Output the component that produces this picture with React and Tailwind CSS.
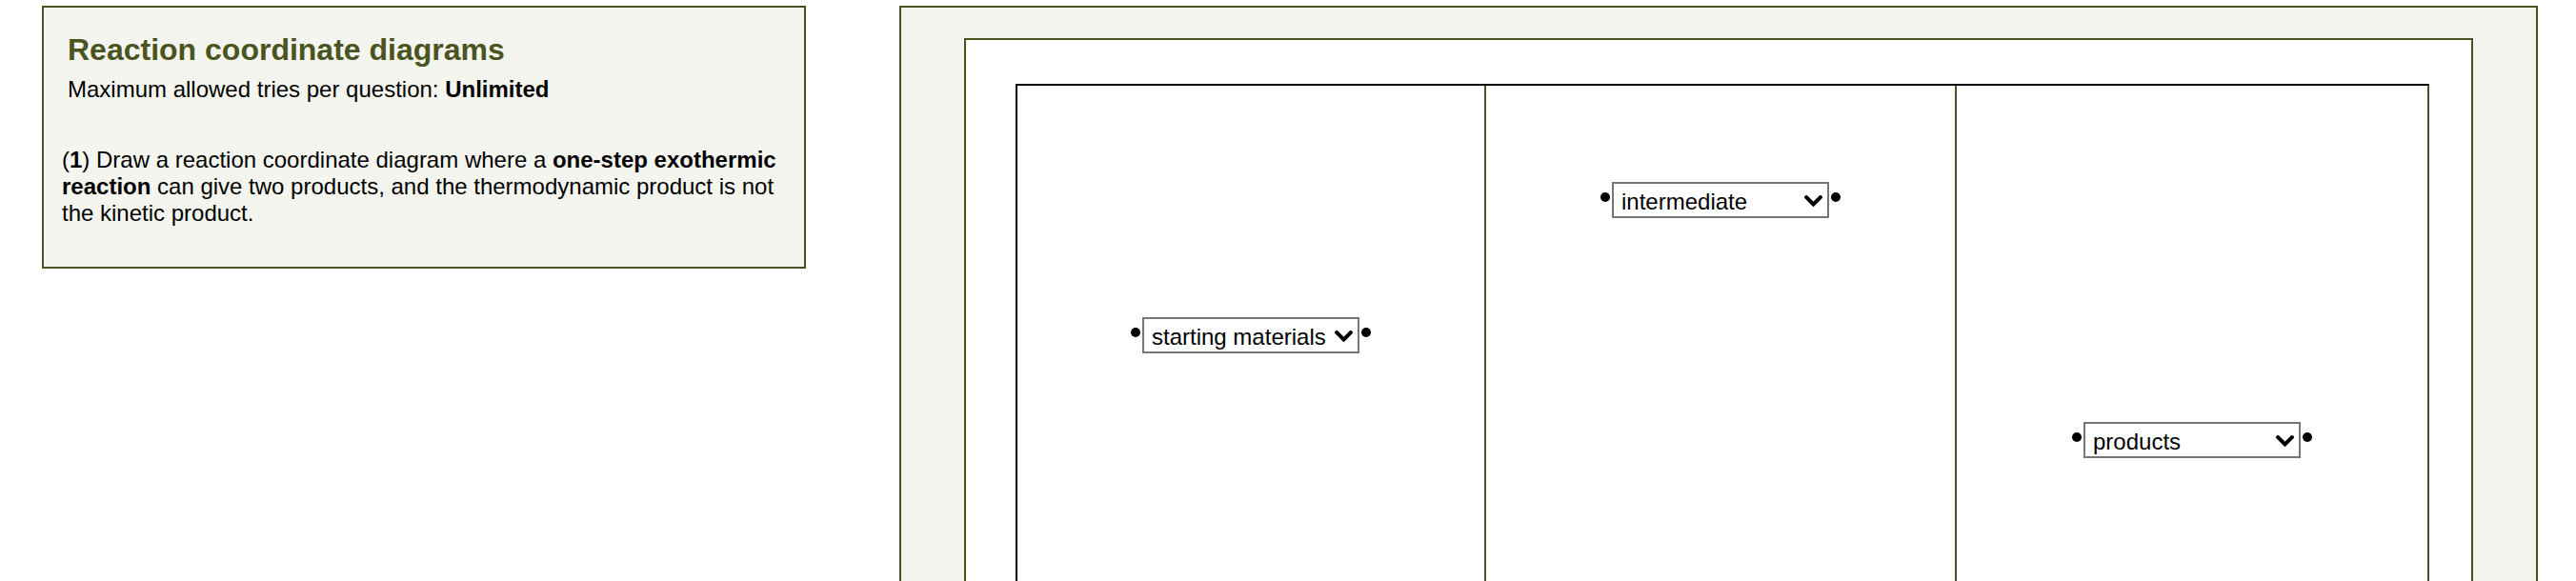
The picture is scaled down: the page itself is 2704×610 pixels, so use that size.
import React from 'react';

const OPTIONS = ['starting materials', 'intermediate', 'transition state', 'products'];

// one column per point on the reaction coordinate; padding sets the energy level
const LEVELS = [
  { id: 'sm', label: 'starting materials', offset: 'pt-[243px]', width: 'w-[492px] border-r-2 border-[#4b5320]' },
  { id: 'int', label: 'intermediate', offset: 'pt-[101px]', width: 'w-[494px] border-r-2 border-[#4b5320]' },
  { id: 'prod', label: 'products', offset: 'pt-[353px]', width: 'flex-1' },
];

const Dot = () => <span className="mt-[11px] block h-[10px] w-[10px] shrink-0 rounded-full bg-black" />;

const LevelSelect = ({ value }) => (
  <div className="relative h-[38px] w-[228px] shrink-0">
    <select
      defaultValue={value}
      className="h-full w-full appearance-none border-2 border-[#767676] bg-white pl-[8px] pr-[30px] pt-[4px] text-[24px] leading-[28px] text-black outline-none"
    >
      {OPTIONS.map((o) => (
        <option key={o} value={o}>
          {o}
        </option>
      ))}
    </select>
    <svg
      className="pointer-events-none absolute right-[7px] top-[14px]"
      width="19"
      height="12"
      viewBox="0 0 19 12"
      fill="none"
    >
      <path d="M2.2 2.2l7.3 7.3 7.3-7.3" stroke="#000" strokeWidth="4" strokeLinecap="square" />
    </svg>
  </div>
);

const LevelColumn = ({ level }) => (
  <div className={`flex shrink-0 items-start justify-center gap-[2px] ${level.offset} ${level.width}`}>
    <Dot />
    <LevelSelect value={level.label} />
    <Dot />
  </div>
);

const QuestionPanel = () => (
  <div className="h-[276px] w-[802px] shrink-0 border-2 border-[#4b5320] bg-[#f4f5ee] pl-[19px] pr-[20px] pt-[26px] text-black">
    <div className="ml-[6px]">
      <h2 className="text-[32px] font-bold leading-[37px] text-[#4b5320]">Reaction coordinate diagrams</h2>
      <p className="mt-[9px] text-[24px] leading-[28px]">
        Maximum allowed tries per question: <b>Unlimited</b>
      </p>
    </div>
    <p className="mt-[46px] text-[24px] leading-[28px]">
      (<b>1</b>) Draw a reaction coordinate diagram where a <b>one-step exothermic reaction</b> can give two
      products, and the thermodynamic product is not the kinetic product.
    </p>
  </div>
);

const DiagramPanel = () => (
  <div className="w-[1720px] shrink-0 border-2 border-[#4b5320] bg-[#f4f5ee] px-[66px] pt-[32px] pb-[40px]">
    <div className="border-2 border-[#4b5320] bg-white pl-[52px] pr-[44px] pt-[46px] pb-[40px]">
      <div className="flex h-[600px] border-l-2 border-r-2 border-t-2 border-l-black border-r-[#4b5320] border-t-black">
        {LEVELS.map((level) => (
          <LevelColumn key={level.id} level={level} />
        ))}
      </div>
    </div>
  </div>
);

export default function App() {
  return (
    <div className="flex min-h-screen items-start gap-[98px] bg-white pl-[44px] pt-[6px] font-['Liberation_Sans',Arial,sans-serif]">
      <QuestionPanel />
      <DiagramPanel />
    </div>
  );
}
